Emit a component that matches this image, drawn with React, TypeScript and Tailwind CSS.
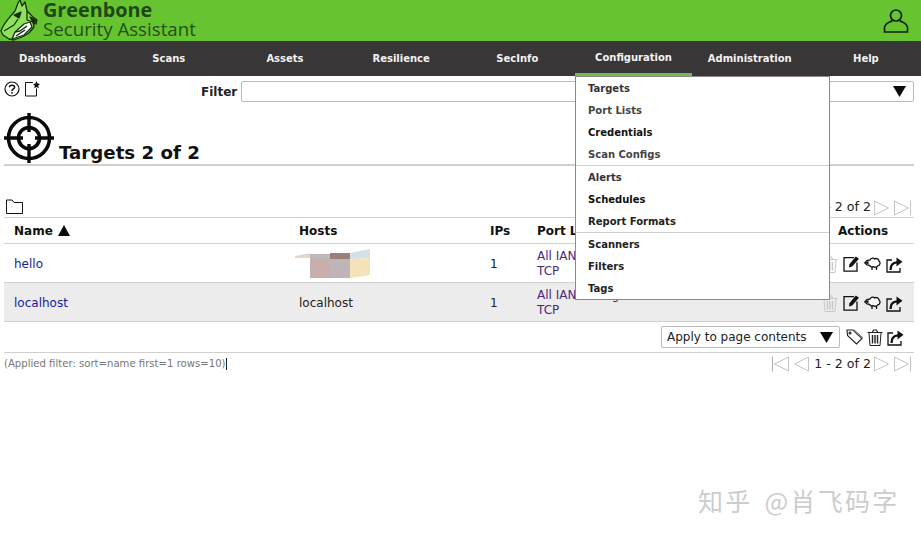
import React from "react";

const navItems = ["Dashboards", "Scans", "Assets", "Resilience", "SecInfo", "Configuration", "Administration", "Help"];
const menu: { label: string; color: string; sep?: boolean }[] = [
  { label: "Targets", color: "text-[#333]" },
  { label: "Port Lists", color: "text-[#444]" },
  { label: "Credentials", color: "text-[#111]" },
  { label: "Scan Configs", color: "text-[#444]" },
  { label: "Alerts", color: "text-[#333]", sep: true },
  { label: "Schedules", color: "text-[#111]" },
  { label: "Report Formats", color: "text-[#222]" },
  { label: "Scanners", color: "text-[#222]", sep: true },
  { label: "Filters", color: "text-[#222]" },
  { label: "Tags", color: "text-[#222]" },
];

const Dog = () => (
  <svg width="40" height="41" viewBox="0 0 40 41" fill="none" stroke="#13300c" strokeWidth="1.3" strokeLinejoin="round">
    <path d="M1 31 C3 24 9 18 15 11 L18 3 L20 0 L22 6 L25 2 L27 11 L33 17 L37 20 L36 24 L33 22 L34 27 L29 33 L22 37 L14 40 L9 39 L6 37 L3 35 Z" fill="#8fe05a" />
    <path d="M12 39 L15 32 L24 24 L30 22 L32 27 L24 35 Z" fill="#fff" />
    <path d="M15 32 L20 31 L27 26 M16 36 L25 30" strokeWidth="1.5" />
    <path d="M14 15 L21 12 L19 18 Z" fill="#13300c" />
    <path d="M4 31 L14 25 L18 19 M27 11 L27 20 L33 22" />
    <path d="M30 17 L36 20 L34 24 Z" fill="#13300c" />
  </svg>
);

const User = () => (
  <svg width="26" height="26" viewBox="0 0 26 26" fill="none" stroke="#10240c" strokeWidth="1.7">
    <circle cx="13" cy="7.5" r="5.5" />
    <path d="M9.5 12.5 C7 14.5 2 14.5 1.5 19.5 L1.5 24 L24.5 24 L24.5 19.5 C24 14.5 19 14.5 16.5 12.5" />
  </svg>
);

const Help = () => (
  <svg width="16" height="16" viewBox="0 0 16 16" fill="none" stroke="#111" strokeWidth="1.2">
    <circle cx="8" cy="8" r="7" />
    <path d="M5.5 6.3 C5.5 3.6 10.6 3.6 10.6 6.3 C10.6 8 8 8 8 10" strokeWidth="1.5" />
    <rect x="7.2" y="11" width="1.6" height="1.6" fill="#111" stroke="none" />
  </svg>
);

const NewIcon = () => (
  <svg width="16" height="16" viewBox="0 0 16 16" fill="none" stroke="#111" strokeWidth="1">
    <path d="M9 1.5 L1.5 1.5 L1.5 15 L12.5 15 L12.5 7.5" />
    <path d="M12.5 0 L13.6 2.6 L16 3 L14.2 4.8 L14.8 7.2 L12.5 6 L10.2 7.2 L10.8 4.8 L9 3 L11.4 2.6 Z" fill="#111" stroke="none" />
  </svg>
);

const Target = () => (
  <svg width="50" height="50" viewBox="0 0 50 50" fill="none" stroke="#0a0a0a">
    <circle cx="25" cy="25" r="20.5" strokeWidth="3.6" />
    <circle cx="25" cy="25" r="10.5" strokeWidth="3.6" />
    <path d="M25 0 L25 19 M25 31 L25 50 M0 25 L19 25 M31 25 L50 25" strokeWidth="3.4" />
  </svg>
);

const Folder = () => (
  <svg width="17" height="15" viewBox="0 0 17 15" fill="none" stroke="#111" strokeWidth="1">
    <path d="M0.5 14.5 L0.5 1 L6 1 L8 3.5 L16.5 3.5 L16.5 14.5 Z" />
  </svg>
);

const Arrow = ({ dir, last }: { dir: "l" | "r"; last?: boolean }) => (
  <svg width={last ? 17 : 15} height="16" viewBox={last ? "0 0 17 16" : "0 0 15 16"} fill="none" stroke="#c4c4c4" strokeWidth="1">
    {dir === "r" ? (
      <>
        <path d="M0.5 1 L14.5 8 L0.5 15 Z" />
        {last && <path d="M16.5 0.5 L16.5 15.5" />}
      </>
    ) : last ? (
      <>
        <path d="M16.5 1 L2.5 8 L16.5 15 Z" />
        <path d="M0.5 0.5 L0.5 15.5" stroke="#aaa" />
      </>
    ) : (
      <path d="M14.5 1 L0.5 8 L14.5 15 Z" />
    )}
  </svg>
);

const Down = () => (
  <svg width="13" height="11" viewBox="0 0 12 11" fill="#0a0a0a" preserveAspectRatio="none">
    <path d="M0 0 L12 0 L6 11 Z" />
  </svg>
);

const Trash = ({ color = "#222" }: { color?: string }) => (
  <svg width="16" height="17" viewBox="0 0 16 17" fill="none" stroke={color} strokeWidth="1" className="shrink-0">
    <path d="M0.5 3.5 L15.5 3.5 M5.5 3 L6.5 1 L9.5 1 L10.5 3" strokeWidth="1.2" />
    <path d="M2 4 L3 16.5 L13 16.5 L14 4" />
    <path d="M5.5 6 L5.5 14.5 M8 6 L8 14.5 M10.5 6 L10.5 14.5" strokeWidth="1.4" />
  </svg>
);

const Edit = () => (
  <svg width="16" height="16" viewBox="0 0 16 16" fill="none" stroke="#111" strokeWidth="1.3" className="shrink-0">
    <path d="M11 1.6 L1 1.6 L1 15.2 L14 15.2 L14 6.5" />
    <path d="M6 11.5 L6.4 8.3 L12.8 0.6 L16 2.8 L9.2 10.5 Z" fill="#111" stroke="none" />
  </svg>
);

const Sheep = () => (
  <svg width="17" height="14" viewBox="0 0 17 14" fill="none" stroke="#111" strokeWidth="1.3" className="shrink-0">
    <path d="M6 3 C7 0.8 9.5 0.8 10.5 2 C12.5 0.8 15 2 15 4 C16.8 5.5 16 8.5 14 8.7 C13 10.5 10 10.6 8.8 9.6 C7.6 10 6 9.6 5.4 8.3 L3 8 L0.8 5.8 L3 3.6 Z" fill="#fff" />
    <path d="M8 10 L8 13 M12.5 10 L12.5 13" />
    <path d="M1 5.8 L4.5 4 L4.5 7.5 Z" fill="#111" stroke="none" />
  </svg>
);

const Export = () => (
  <svg width="17" height="17" viewBox="0 0 17 17" fill="none" stroke="#111" className="shrink-0">
    <path d="M6 4 L1 4 L1 16 L14 16 L14 12" strokeWidth="1.3" />
    <path d="M4.5 14 C4.5 8.5 7 6.5 11 6.3" strokeWidth="2.3" />
    <path d="M10.5 1.5 L16.5 5.8 L10.5 10.5 Z" fill="#111" stroke="none" />
  </svg>
);

const Tag = () => (
  <svg width="17" height="16" viewBox="0 0 17 16" fill="none" stroke="#222" strokeWidth="1.1">
    <path d="M1 1 L7 1 L16 9.5 L10.5 15 L1.5 6.5 Z" />
    <path d="M8 1 L16.8 8.8" stroke="#888" />
    <circle cx="4" cy="4" r="1" />
  </svg>
);

const Pager = () => (
  <div className="flex items-center gap-[5px] mr-[3px]">
    <Arrow dir="l" last />
    <Arrow dir="l" />
    <span className="text-[12.6px] text-[#222] mr-[-2px]">1 - 2 of 2</span>
    <Arrow dir="r" />
    <Arrow dir="r" last />
  </div>
);

const Hosts = () => (
  <svg width="76" height="30" viewBox="0 0 76 30">
    <path d="M0 7 L15 4 L15 9 L0 9 Z" fill="#e8d6c8" />
    <rect x="15" y="5" width="20" height="5" fill="#bdb9ba" />
    <rect x="35" y="4" width="20" height="6" fill="#9c7f7b" />
    <rect x="15" y="10" width="20" height="19" fill="#c9aeab" />
    <rect x="35" y="10" width="20" height="19" fill="#bfb5b8" />
    <path d="M55 4 L75 0 L75 9 L55 10 Z" fill="#d2e0e8" />
    <path d="M55 10 L75 9 L75 26 L55 29 Z" fill="#f5e2b8" />
  </svg>
);

const Row = ({ name, hosts, alt }: { name: string; hosts: React.ReactNode; alt?: boolean }) => (
  <div className={`grid grid-cols-[285px_191px_47px_301px_86px] h-[39px] pt-[2px] items-center border-b border-[#d0d0d0] text-[12px] text-[#222] ${alt ? "bg-[#ececec]" : ""}`}>
    <div className="pl-[10px] text-[#1a1a9a]">{name}</div>
    <div className="pl-[10px] flex items-center">{hosts}</div>
    <div className="pl-[10px]">1</div>
    <div className="pl-[10px] text-[#4b2a78] leading-[15px]">
      All IANA assigned
      <br />
      TCP
    </div>
    <div className="flex items-center gap-[5px] justify-end pr-[11px]">
      <Trash color="#c8c8c8" />
      <Edit />
      <Sheep />
      <Export />
    </div>
  </div>
);

export default function App() {
  return (
    <div className="relative w-[921px] h-[538px] overflow-hidden bg-white font-['DejaVu_Sans','Liberation_Sans',sans-serif]">
      {/* Header */}
      <header className="h-[41px] bg-[#66c430] flex items-center justify-between pr-[12px]">
        <div className="flex items-center">
          <Dog />
          <div className="ml-[3px] mt-[-2px] font-['Open_Sans',sans-serif] text-[#24501a]">
            <div className="text-[19.8px] font-bold leading-[18px] text-[#1f4716]">Greenbone</div>
            <div className="text-[18.7px] leading-[19px]">Security Assistant</div>
          </div>
        </div>
        <User />
      </header>

      {/* Nav */}
      <nav className="h-[35px] bg-[#393637] flex ml-[-5.5px]">
        {navItems.map((n) => (
          <div
            key={n}
            className={`w-[116.2px] shrink-0 flex items-center justify-center text-[10px] font-bold text-[#f2f2f2] ${
              n === "Configuration" ? "border-b-[3px] border-[#76b852]" : ""
            }`}
          >
            {n}
          </div>
        ))}
      </nav>

      {/* Main */}
      <main className="pl-[4px] pr-[7px]">
        <div className="h-[26px] flex items-center relative">
          <div className="flex items-center gap-[4px] w-[197px] pb-[1px]">
            <Help />
            <NewIcon />
          </div>
          <span className="text-[12px] font-bold text-[#222] w-[40px] mt-[6px]">Filter</span>
          <div className="flex-1 h-[21px] mt-[6px] mb-[1px] border border-[#bbb] rounded-[2px] flex items-center justify-end pr-[7px]">
            <Down />
          </div>
        </div>

        <div className="h-[64px] pt-[10px] border-b-2 border-[#cfcfcf] flex items-end">
          <div className="mb-[1px]">
            <Target />
          </div>
          <h1 className="ml-[5px] mb-[-2px] text-[18.2px] font-bold text-[#111] leading-[26px]">Targets 2 of 2</h1>
        </div>

        <div className="h-[51px] flex items-end justify-between">
          <div className="ml-[2px] mb-[3px]">
            <Folder />
          </div>
          <Pager />
        </div>

        {/* Table */}
        <div className="border-t border-[#d0d0d0]">
          <div className="grid grid-cols-[285px_191px_47px_301px_86px] h-[26px] items-center border-b border-[#d0d0d0] text-[12px] font-bold text-[#111]">
            <div className="pl-[10px] flex items-center gap-[5px]">
              Name
              <svg width="12" height="11" viewBox="0 0 12 11" fill="#0a0a0a">
                <path d="M0 11 L12 11 L6 0 Z" />
              </svg>
            </div>
            <div className="pl-[10px]">Hosts</div>
            <div className="pl-[10px]">IPs</div>
            <div className="pl-[10px]">Port Lists</div>
            <div className="pl-[10px]">Actions</div>
          </div>
          <Row name="hello" hosts={<div className="ml-[-4px]"><Hosts /></div>} />
          <Row name="localhost" hosts="localhost" alt />
        </div>

        <div className="h-[31px] border-b border-[#d0d0d0] flex items-center justify-end pr-[10px]">
          <div className="w-[179px] h-[22px] border border-[#bbb] rounded-[2px] flex items-center justify-between pl-[5px] pr-[6px] text-[12px] text-[#222]">
            Apply to page contents
            <Down />
          </div>
          <div className="flex items-center gap-[4px] ml-[6px]">
            <Tag />
            <Trash />
            <Export />
          </div>
        </div>

        <div className="h-[22px] flex items-center justify-between">
          <span className="text-[10.1px] text-[#777] border-r border-[#222] leading-[12px]">
            (Applied filter: sort=name first=1 rows=10)
          </span>
          <Pager />
        </div>
      </main>

      {/* Dropdown */}
      <div className="absolute left-[575px] top-[76px] w-[255px] h-[224px] bg-white border border-[#8a8a8a]">
        {menu.map((m) => (
          <div
            key={m.label}
            className={`flex items-center pl-[12px] text-[10px] font-bold ${m.color} ${
              m.sep ? "border-t border-[#cfcfcf] h-[23px]" : "h-[22px]"
            }`}
          >
            {m.label}
          </div>
        ))}
      </div>

      {/* Watermark */}
      <div className="absolute left-[698px] top-[484px] text-[25px] leading-[33px] tracking-[2.3px] [word-spacing:4px] text-[#cccccc] font-['Noto_Sans_CJK_SC',sans-serif] whitespace-nowrap">
        知乎 @肖飞码字
      </div>
    </div>
  );
}
